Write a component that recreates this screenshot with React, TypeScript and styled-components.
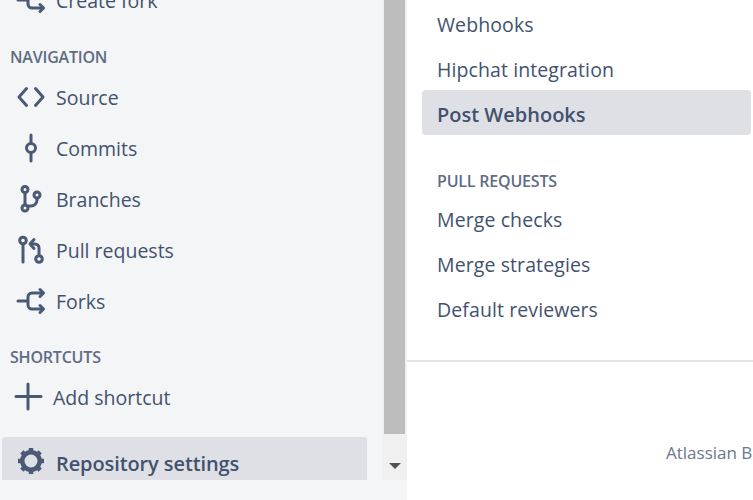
import { ReactNode } from 'react';
import styled, { createGlobalStyle } from 'styled-components';

const GlobalStyle = createGlobalStyle`
  html, body {
    margin: 0;
    padding: 0;
    background: #fff;
  }
  body {
    font-family: "Open Sans", "Noto Sans", "Liberation Sans", sans-serif;
  }
`;

const Page = styled.div`
  display: flex;
  width: 753px;
  height: 500px;
  overflow: hidden;
`;

const Sidebar = styled.aside`
  flex: 0 0 407px;
  height: 500px;
  background: #f4f5f7;
`;

const SidebarFrame = styled.div`
  display: flex;
  height: 480px;
`;

/* content is scrolled to the bottom, so it hangs off the top edge */
const SidebarScroll = styled.nav`
  flex: 0 0 382px;
  display: flex;
  flex-direction: column;
  justify-content: flex-end;
  overflow: hidden;
  height: 480px;
`;

const ScrollTrack = styled.div`
  flex: 0 0 25px;
  display: flex;
  flex-direction: column;
  align-items: center;
  background: #f0f0f0;
`;

const ScrollThumb = styled.div`
  width: 21px;
  height: 434px;
  background: #bdbdbd;
`;

const ScrollArrow = styled.div`
  width: 0;
  height: 0;
  margin-top: 29px;
  border-left: 6px solid transparent;
  border-right: 6px solid transparent;
  border-top: 6px solid #505050;
`;

const SideHeading = styled.h3<{ $top: number }>`
  flex: none;
  margin: ${(p) => p.$top}px 0 0 10px;
  height: 27px;
  line-height: 24px;
  font-size: 16px;
  font-weight: 600;
  color: #5e6c84;
  letter-spacing: -0.2px;
`;

const SideRow = styled.a`
  flex: none;
  display: flex;
  align-items: center;
  height: 51px;
  padding-left: 16px;
  font-size: 19.5px;
  color: #42526e;
  letter-spacing: 0;
`;

const AddRow = styled(SideRow)`
  padding-left: 14px;
`;

const SettingsRow = styled.a`
  flex: none;
  display: flex;
  align-items: center;
  width: 365px;
  height: 43px;
  margin: 14px 0 0 2px;
  padding: 9px 0 0 14px;
  box-sizing: border-box;
  border-radius: 3px 3px 0 0;
  background: #dfe0e5;
  font-size: 20px;
  font-weight: 600;
  color: #42526e;
  letter-spacing: -0.1px;
`;

const IconBox = styled.span<{ $gap: number }>`
  flex: none;
  display: flex;
  width: 30px;
  height: 30px;
  margin: 0 ${(p) => p.$gap}px 2px 0;
  color: #4a5a76;
`;

const Main = styled.main`
  flex: 1;
  min-width: 0;
  display: flex;
  flex-direction: column;
  background: #fff;
`;

const SettingsNav = styled.div`
  display: flex;
  flex-direction: column;
  height: 362px;
  box-sizing: border-box;
  padding: 0 2px 0 15px;
  border-bottom: 2px solid #e4e4e6;
`;

const NavLink = styled.a<{ $active?: boolean }>`
  flex: none;
  height: 45px;
  box-sizing: border-box;
  padding: 4px 0 0 15px;
  line-height: 41px;
  border-radius: 4px;
  font-size: ${(p) => (p.$active ? 20 : 19.5)}px;
  font-weight: ${(p) => (p.$active ? 600 : 400)};
  letter-spacing: ${(p) => (p.$active ? '0' : '0.1px')};
  color: #42526e;
  background: ${(p) => (p.$active ? '#dfe0e5' : 'transparent')};
`;

const NavHeading = styled.h3`
  flex: none;
  margin: 34px 0 0 15px;
  height: 26px;
  line-height: 24px;
  font-size: 16px;
  font-weight: 600;
  color: #5e6c84;
  letter-spacing: -0.2px;
`;

const Footer = styled.footer`
  padding: 80px 0 0 259px;
  font-size: 17px;
  line-height: 22px;
  color: #6b778c;
  white-space: nowrap;
`;

type IconProps = { children: ReactNode; gap?: number };

const Icon = ({ children, gap = 10 }: IconProps) => (
  <IconBox $gap={gap}>
    <svg
      width="30"
      height="30"
      viewBox="0 0 30 30"
      fill="none"
      stroke="currentColor"
      strokeWidth="3"
      strokeLinecap="round"
      strokeLinejoin="round"
    >
      {children}
    </svg>
  </IconBox>
);

const ForkPaths = () => (
  <>
    <path d="M2 15h9" />
    <path d="M27 7h-11a4 4 0 0 0-4 4v8a4 4 0 0 0 4 4h11" />
    <path d="M24 3.500 27.500 7 24 10.500" />
    <path d="M24 19.500 27.500 23 24 26.500" />
  </>
);

const App = () => (
  <Page>
    <GlobalStyle />
    <Sidebar>
      <SidebarFrame>
        <SidebarScroll>
          <SideRow>
            <Icon>
              <ForkPaths />
            </Icon>
            Create fork
          </SideRow>
          <SideHeading $top={19}>NAVIGATION</SideHeading>
          <SideRow>
            <Icon>
              <path d="M10.500 6.500 3 15l7.500 8.500" />
              <path d="M19.500 6.500 27 15l-7.500 8.500" />
            </Icon>
            Source
          </SideRow>
          <SideRow>
            <Icon>
              <path d="M15 2v7" />
              <path d="M15 21v7" />
              <circle cx="15" cy="15" r="4.500" />
            </Icon>
            Commits
          </SideRow>
          <SideRow>
            <Icon>
              <circle cx="9" cy="5.500" r="3" />
              <circle cx="9" cy="24" r="3" />
              <circle cx="21" cy="11" r="3" />
              <path d="M9 9v12" />
              <path d="M21 14v2a6 6 0 0 1-6 6h-3" />
            </Icon>
            Branches
          </SideRow>
          <SideRow>
            <Icon>
              <circle cx="7" cy="5.500" r="3.300" />
              <circle cx="23" cy="24" r="3.300" />
              <path d="M7 10v17" />
              <path d="M23 20v-7a4 4 0 0 0-4-4h-4" />
              <path d="M18 4.500 14 9l4 4.500" />
            </Icon>
            Pull requests
          </SideRow>
          <SideRow>
            <Icon>
              <ForkPaths />
            </Icon>
            Forks
          </SideRow>
          <SideHeading $top={18}>SHORTCUTS</SideHeading>
          <AddRow>
            <Icon gap={9}>
              <path d="M14 2v25" />
              <path d="M2 14.500h25" />
            </Icon>
            Add shortcut
          </AddRow>
          <SettingsRow>
            <Icon>
              <circle cx="15" cy="14" r="8.700" strokeWidth="4.400" />
              <path
                d="M15 1v4M15 23v4M2 14h4M24 14h4M5.800 4.800l2.800 2.800M21.400 20.400l2.800 2.800M5.800 23.200l2.800-2.800M21.400 7.600l2.800-2.800"
                strokeWidth="4.500"
                strokeLinecap="butt"
              />
            </Icon>
            Repository settings
          </SettingsRow>
        </SidebarScroll>
        <ScrollTrack>
          <ScrollThumb />
          <ScrollArrow />
        </ScrollTrack>
      </SidebarFrame>
    </Sidebar>
    <Main>
      <SettingsNav>
        <NavLink>Webhooks</NavLink>
        <NavLink>Hipchat integration</NavLink>
        <NavLink $active>Post Webhooks</NavLink>
        <NavHeading>PULL REQUESTS</NavHeading>
        <NavLink>Merge checks</NavLink>
        <NavLink>Merge strategies</NavLink>
        <NavLink>Default reviewers</NavLink>
      </SettingsNav>
      <Footer>Atlassian Bitbucket</Footer>
    </Main>
  </Page>
);

export default App;
